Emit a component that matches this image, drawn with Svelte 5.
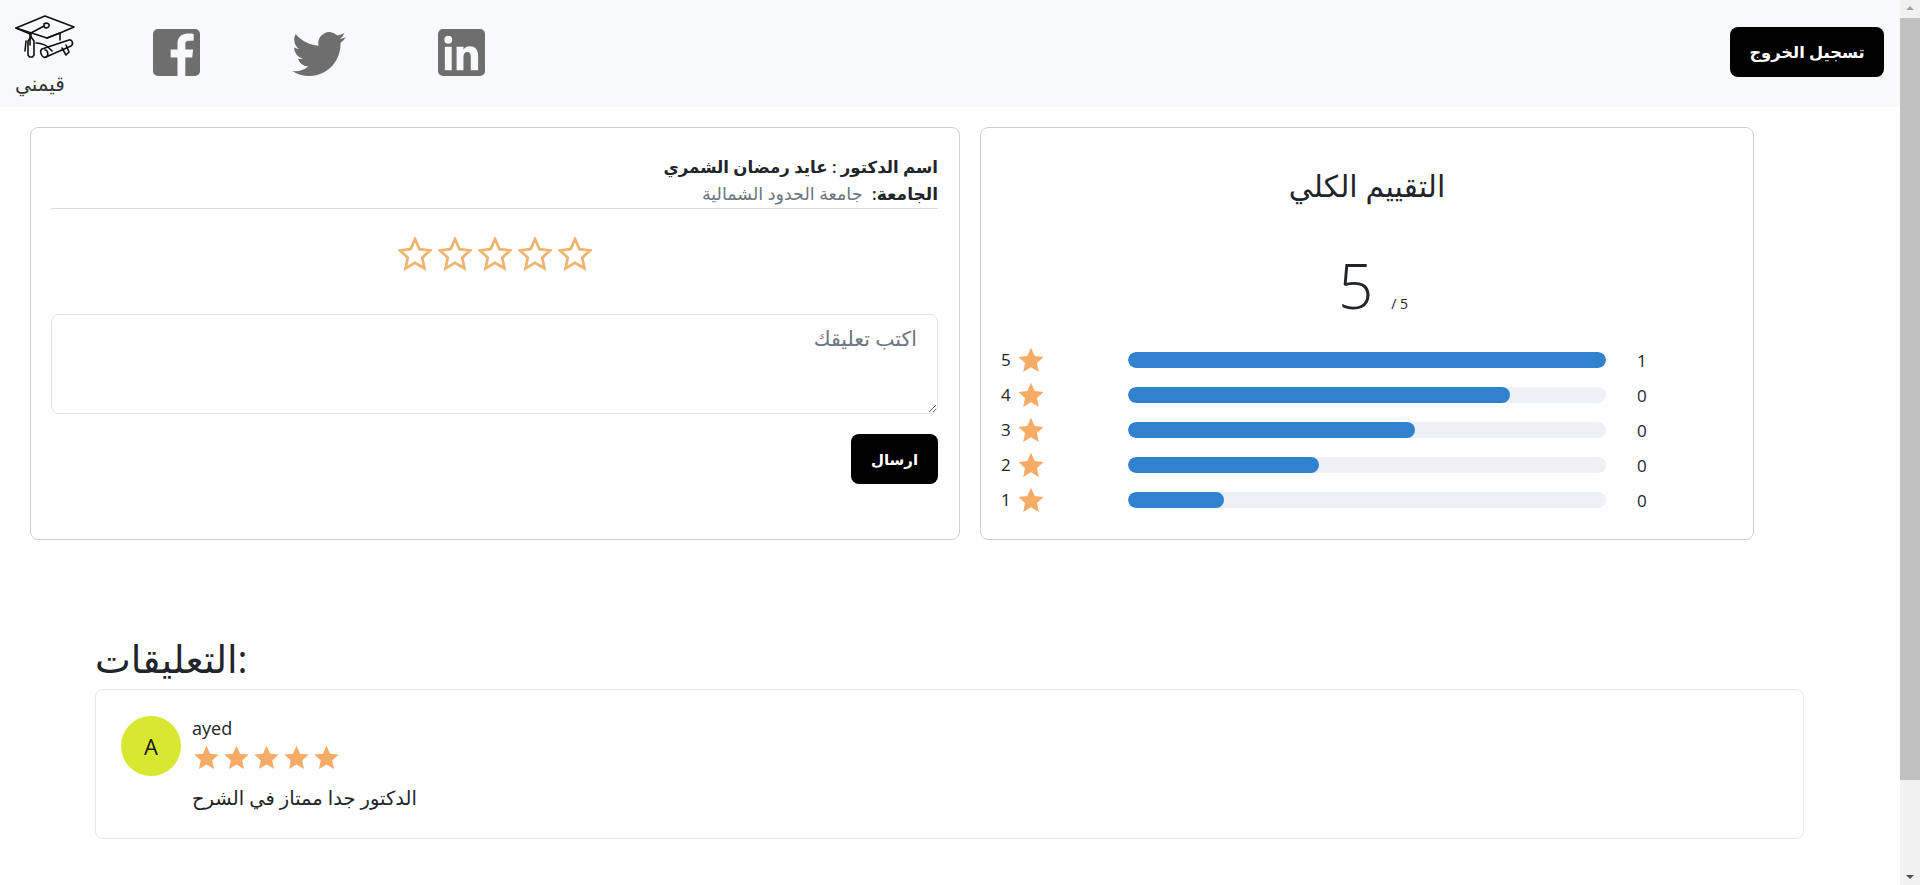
<script>
  const rows = [
    { n: 5, w: 100, c: 1 },
    { n: 4, w: 80, c: 0 },
    { n: 3, w: 60, c: 0 },
    { n: 2, w: 40, c: 0 },
    { n: 1, w: 20, c: 0 }
  ];
  const star = 'M12 1.5l3.2 7.1 7.6.8-5.7 5.2 1.6 7.6L12 18.3 5.3 22.2l1.6-7.6L1.2 9.4l7.6-.8z';
</script>

<div class="page">
  <nav class="nav">
    <div class="brand">
      <svg class="cap" viewBox="0 0 60 50" fill="none" stroke="#111" stroke-width="1.6" stroke-linejoin="round" stroke-linecap="round">
        <path d="M30 1 59 12 45 18 32 23 1 13z" />
        <path d="M1 13 15 19M32 23l13-5" />
        <path d="M15 19 15 30M45 18v7" />
        <path d="M29 9c3-2 6 0 5 2-1 3-5 2-5 0zM29 11 16 18" />
        <path d="M16 18v5M13 26l3-4 3 4v14l-1.500 2h-3l-1.500-2z" />
        <path d="M11 26 10 36M21 28c6 0 12 3 14 6l2 2" />
        <path d="M27 34 54 25c3-1 5 4 2 6L31 42c-4 2-7-6-4-8z" />
        <path d="M31 42c3-1 2-7-1-7M47 33l4 7 3-3-3-7" />
      </svg>
      <span class="brand-name">قيمني</span>
    </div>
    <div class="socials">
      <svg class="social" viewBox="0 0 48 48"><path fill="#6e6e6e" d="M5 0h38a5 5 0 0 1 5 5v38a5 5 0 0 1-5 5H33V29h7l1-8h-8v-5c0-2.500.8-4 4-4h4.500V5c-1-.1-3.500-.3-6-.3-6 0-10.500 3.700-10.500 10.300v6h-7v8h7v19H5a5 5 0 0 1-5-5V5a5 5 0 0 1 5-5z"/></svg>
      <svg class="social twitter" viewBox="0 0 24 24"><path fill="#6e6e6e" d="M23.950 4.570a10 10 0 0 1-2.820.78 4.960 4.960 0 0 0 2.160-2.720c-.95.550-2 .96-3.130 1.190a4.920 4.920 0 0 0-8.380 4.480C7.690 8.100 4.070 6.130 1.640 3.160a4.820 4.820 0 0 0-.67 2.480c0 1.710.87 3.210 2.190 4.100a4.900 4.900 0 0 1-2.230-.62v.06a4.920 4.920 0 0 0 3.950 4.830 5 5 0 0 1-2.210.08 4.940 4.940 0 0 0 4.600 3.420A9.870 9.870 0 0 1 0 19.540a14 14 0 0 0 7.560 2.210c9.050 0 14-7.500 14-13.980 0-.21 0-.42-.02-.63a9.940 9.940 0 0 0 2.410-2.570z"/></svg>
      <svg class="social" viewBox="0 0 48 48"><path fill="#6e6e6e" fill-rule="evenodd" d="M5 0h38a5 5 0 0 1 5 5v38a5 5 0 0 1-5 5H5a5 5 0 0 1-5-5V5a5 5 0 0 1 5-5zm2 18v24h7V18zm3.500-11a4 4 0 1 0 0 8 4 4 0 0 0 0-8zM19 18v24h7V29c0-3.500 1.200-5.500 4-5.500s3.500 2.200 3.500 5.300V42H41V27.500C41 20.500 37.500 17.500 32.500 17.500c-3.200 0-5.200 1.500-6.500 3.500v-3z"/></svg>
    </div>
    <button class="btn logout">تسجيل الخروج</button>
  </nav>

  <main class="cards">
    <section class="card form-card" dir="rtl">
      <h2 class="doctor">اسم الدكتور : عايد رمضان الشمري</h2>
      <p class="uni"><b>الجامعة:</b> <span>جامعة الحدود الشمالية</span></p>
      <hr />
      <div class="rate" dir="ltr">
        {#each [1, 2, 3, 4, 5] as s (s)}
          <svg viewBox="0 0 24 24" class="empty-star"><path d={star} /></svg>
        {/each}
      </div>
      <textarea dir="ltr" placeholder="اكتب تعليقك"></textarea>
      <button class="btn send">ارسال</button>
    </section>

    <section class="card summary">
      <h3 dir="rtl">التقييم الكلي</h3>
      <div class="score"><span class="big">5</span><span class="of">/ 5</span></div>
      <div class="bars">
        {#each rows as r (r.n)}
          <div class="row">
            <span class="label">{r.n}</span>
            <svg viewBox="0 0 24 24" class="full-star"><path d={star} /></svg>
            <div class="track"><div class="fill" style="width:{r.w}%"></div></div>
            <span class="count">{r.c}</span>
          </div>
        {/each}
      </div>
    </section>
  </main>

  <section class="comments">
    <h2 class="comments-title">التعليقات:</h2>
    <article class="comment">
      <div class="avatar">A</div>
      <div class="body">
        <div class="author">ayed</div>
        <div class="stars">
          {#each [1, 2, 3, 4, 5] as s (s)}
            <svg viewBox="0 0 24 24" class="full-star small"><path d={star} /></svg>
          {/each}
        </div>
        <p class="text">الدكتور جدا ممتاز في الشرح</p>
      </div>
    </article>
  </section>
</div>

<div class="scrollbar">
  <div class="arrow up"></div>
  <div class="thumb"></div>
  <div class="arrow down"></div>
</div>

<style>
  :global(body) {
    margin: 0;
    background: #fff;
    overflow: hidden;
    font-family: "Open Sans", "Noto Sans", "DejaVu Sans", sans-serif;
    color: #212529;
  }
  .page {
    width: 1900px;
    height: 885px;
    overflow: hidden;
  }
  .nav {
    height: 107px;
    background: #f8f9fa;
    display: flex;
    align-items: center;
    padding: 0 16px 0 15px;
    box-sizing: border-box;
  }
  .brand {
    width: 50px;
    display: flex;
    flex-direction: column;
    align-items: center;
    margin-top: 3px;
  }
  .cap { width: 60px; height: 50px; flex: none; margin-left: 10px; }
  .brand-name {
    font-size: 20px;
    line-height: 24px;
    margin-top: 7px;
    color: #333;
    white-space: nowrap;
  }
  .socials {
    display: flex;
    align-items: center;
    margin: 0 0 2px 88px;
    gap: 92px;
    flex: 1;
  }
  .social { width: 47px; height: 47px; flex: none; }
  .twitter { width: 54px; height: 54px; margin-top: 2px; }
  .btn {
    background: #000;
    color: #fff;
    border: 0;
    border-radius: 8px;
    font-family: inherit;
    font-weight: 600;
    font-size: 16.3px;
  }
  .logout { width: 154px; height: 50px; margin-bottom: 3px; }
  .cards {
    display: flex;
    flex-direction: row;
    gap: 20px;
    padding: 20px 0 0 30px;
  }
  .card {
    box-sizing: border-box;
    height: 413px;
    border: 1px solid #cfcfcf;
    border-radius: 8px;
    background: #fff;
  }
  .form-card {
    width: 930px;
    padding: 25px 21px 0 20px;
    display: flex;
    flex-direction: column;
  }
  .doctor {
    margin: 0;
    font-size: 16.6px;
    line-height: 27px;
    font-weight: 600;
  }
  .uni {
    margin: 0;
    height: 28px;
    font-size: 17.5px;
    line-height: 27px;
    color: #6c757d;
  }
  .uni b { color: #212529; font-weight: 600; font-size: 17px; }
  .uni span { margin-right: 5px; }
  hr {
    border: 0;
    border-top: 1px solid #dcdcdc;
    margin: 0;
    width: 100%;
  }
  .rate {
    display: flex;
    justify-content: center;
    gap: 6px;
    margin: 28px 0 0;
  }
  .empty-star { width: 34px; height: 34px; }
  .empty-star path { fill: none; stroke: #eeb36f; stroke-width: 1.9; }
  textarea {
    box-sizing: border-box;
    width: 100%;
    height: 100px;
    margin-top: 43px;
    border: 1px solid #dee2e6;
    border-radius: 8px;
    padding: 10px 20px;
    font-family: inherit;
    font-size: 20.5px;
    line-height: 27px;
    text-align: right;
    flex: none;
    background: #fff;
    outline: none;
    display: block;
  }
  textarea::placeholder { color: #6c757d; opacity: 1; }
  .send {
    width: 87px;
    height: 50px;
    margin-top: 20px;
    align-self: flex-start;
    font-size: 15px;
  }
  .summary {
    width: 774px;
    padding: 0 18px;
  }
  h3 {
    margin: 37px 0 0;
    font-size: 30px;
    line-height: 42px;
    font-weight: 400;
    text-align: center;
  }
  .score {
    display: flex;
    justify-content: center;
    align-items: baseline;
    gap: 18px;
    margin-top: 41px;
    height: 75px;
    padding-left: 12px;
  }
  .big { font-size: 62px; line-height: 75px; font-weight: 300; }
  .of { font-size: 14px; }
  .bars {
    display: flex;
    flex-direction: column;
    gap: 11px;
    margin-top: 25px;
  }
  .row {
    display: flex;
    align-items: center;
    height: 24px;
    padding-left: 2px;
  }
  .label { font-size: 17px; width: 16px; line-height: 24px; }
  .full-star { width: 28px; height: 28px; flex: none; }
  .full-star path { fill: #f6ac66; }
  .track {
    width: 478px;
    height: 16px;
    border-radius: 8px;
    background: #edf1f5;
    margin-left: 83px;
    overflow: hidden;
  }
  .fill { height: 100%; background: #3182ce; border-radius: 8px; }
  .count { font-size: 17px; margin-left: 31px; }
  .comments { padding: 0 0 0 95px; margin-top: 95px; }
  .comments-title {
    margin: 0 0 8px;
    font-size: 38px;
    line-height: 46px;
    font-weight: 400;
    display: inline-block;
  }
  .comment {
    box-sizing: border-box;
    width: 1709px;
    height: 150px;
    border: 1px solid #e4e6e8;
    border-radius: 8px;
    padding: 26px 24px 26px 25px;
    display: flex;
    gap: 11px;
    margin-top: 0;
  }
  .avatar {
    width: 60px;
    height: 60px;
    border-radius: 50%;
    background: #d8e72f;
    display: flex;
    align-items: center;
    justify-content: center;
    font-size: 22px;
    color: #1a1a1a;
    flex: none;
  }
  .author { font-size: 18px; line-height: 24px; font-weight: 500; }
  .stars { display: flex; gap: 3px; margin: 4px 0 0 1px; }
  .small { width: 27px; height: 27px; }
  .text { margin: 13px 0 0; font-size: 19.5px; line-height: 27px; }
  .scrollbar {
    position: fixed;
    top: 0;
    right: 0;
    width: 20px;
    height: 885px;
    background: #f1f1f1;
    display: flex;
    flex-direction: column;
    align-items: center;
  }
  .arrow { height: 18px; width: 100%; position: relative; flex: none; }
  .up::after, .down::after {
    content: "";
    position: absolute;
    left: 6px;
    border-left: 4px solid transparent;
    border-right: 4px solid transparent;
  }
  .up::after { top: 6px; border-bottom: 4px solid #a3a3a3; }
  .down { margin-top: auto; }
  .down::after { bottom: 6px; border-top: 4px solid #505050; }
  .thumb { width: 100%; height: 762px; background: #c1c1c1; flex: none; }
</style>
